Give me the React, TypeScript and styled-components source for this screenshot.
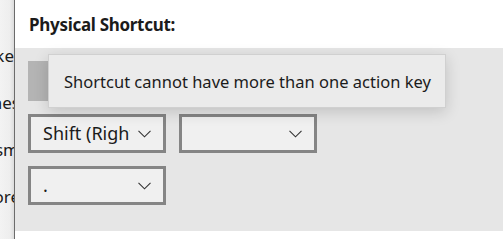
import React from 'react';
import styled, { createGlobalStyle } from 'styled-components';

const GlobalStyle = createGlobalStyle`
    html, body {
        margin: 0;
        padding: 0;
        background: #ffffff;
        font-family: 'Noto Sans', 'Segoe UI', sans-serif;
        color: #1b1b1b;
        overflow: hidden;
    }
`;

const Page = styled.div`
    display: flex;
    width: 503px;
    height: 239px;
    overflow: hidden;
`;

const SideList = styled.div`
    width: 14px;
    flex-shrink: 0;
    background: linear-gradient(to right, #f3f3f3 0%, #eeeeee 70%, #dcdcdc 100%);
    display: flex;
    flex-direction: column;
    padding-top: 46px;
    gap: 27px;
    overflow: hidden;
`;

const SideItem = styled.div<{ cut: number }>`
    display: flex;
    justify-content: flex-end;
    white-space: nowrap;
    font-size: 17px;
    line-height: 20px;
    margin-right: ${(p) => -p.cut}px;
`;

const Divider = styled.div`
    width: 1px;
    flex-shrink: 0;
    background: #6b6b6b;
`;

const Dialog = styled.div`
    flex: 1;
    display: flex;
    flex-direction: column;
    background: #ffffff;
`;

const Header = styled.div`
    height: 48px;
    display: flex;
    align-items: center;
    padding-left: 14px;
    box-sizing: border-box;
`;

const Title = styled.h2`
    margin: 0;
    font-size: 17px;
    font-weight: 700;
    letter-spacing: -0.3px;
`;

const Body = styled.div`
    position: relative;
    height: 183px;
    background: #e6e6e6;
    padding: 13px 13px;
    box-sizing: border-box;
    display: flex;
    flex-direction: column;
    gap: 13px;
`;

const TypeButton = styled.div`
    width: 110px;
    height: 40px;
    background: #b4b4b4;
`;

const ComboRow = styled.div`
    display: flex;
    gap: 13px;
`;

const Combo = styled.div`
    width: 138px;
    height: 39px;
    box-sizing: border-box;
    border: 3px solid #858585;
    background: #f0f0f0;
    display: flex;
    align-items: center;
    padding: 0 12px 0 12px;
    gap: 8px;
`;

const ComboText = styled.span`
    flex: 1;
    overflow: hidden;
    white-space: nowrap;
    font-size: 18px;
    line-height: 24px;
    padding-bottom: 2px;
`;

const Chevron = styled.svg`
    flex-shrink: 0;
    width: 13px;
    height: 8px;
`;

const Tooltip = styled.div`
    position: absolute;
    left: 33px;
    top: 6px;
    width: 398px;
    height: 54px;
    box-sizing: border-box;
    background: #ebebeb;
    border: 1px solid #d0d0d0;
    box-shadow: 0 4px 14px rgba(0, 0, 0, 0.16);
    display: flex;
    align-items: center;
    padding-left: 15px;
    font-size: 16.5px;
    white-space: nowrap;
`;

const Footer = styled.div`
    flex: 1;
    background: #ffffff;
`;

const ChevronIcon = () => (
    <Chevron viewBox="0 0 13 8">
        <path d="M0.5 0.8 L6.5 6.8 L12.5 0.8" fill="none" stroke="#333" strokeWidth="1.1" />
    </Chevron>
);

const App: React.FC = () => {
    return (
        <Page>
            <GlobalStyle />
            <SideList>
                <SideItem cut={0}>Make</SideItem>
                <SideItem cut={6}>Lines</SideItem>
                <SideItem cut={5}>Prism</SideItem>
                <SideItem cut={6}>More</SideItem>
            </SideList>
            <Divider />
            <Dialog>
                <Header>
                    <Title>Physical Shortcut:</Title>
                </Header>
                <Body>
                    <TypeButton />
                    <ComboRow>
                        <Combo>
                            <ComboText>Shift (Right)</ComboText>
                            <ChevronIcon />
                        </Combo>
                        <Combo>
                            <ComboText />
                            <ChevronIcon />
                        </Combo>
                    </ComboRow>
                    <ComboRow>
                        <Combo>
                            <ComboText>.</ComboText>
                            <ChevronIcon />
                        </Combo>
                    </ComboRow>
                    <Tooltip>Shortcut cannot have more than one action key</Tooltip>
                </Body>
                <Footer />
            </Dialog>
        </Page>
    );
};

export default App;
